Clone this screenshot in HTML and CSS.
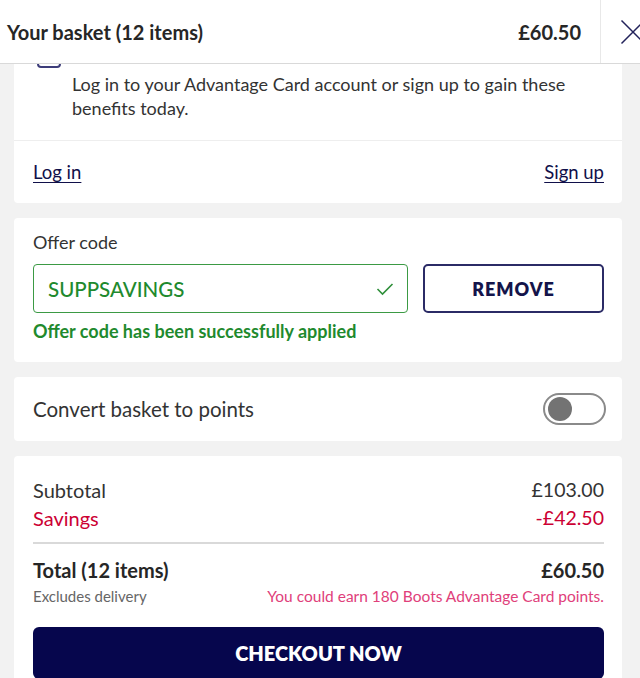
FILE: index.html
```html
<!DOCTYPE html>
<html lang="en">
<head>
<meta charset="utf-8">
<title>Your basket</title>
<link rel="stylesheet" href="styles.css">
</head>
<body>
<header class="topbar">
  <h1 class="topbar-title">Your basket (12 items)</h1>
  <span class="topbar-price">£60.50</span>
  <button class="topbar-close" aria-label="Close">
    <svg width="26" height="26" viewBox="0 0 26 26"><path d="M1.5 1.5 L24.5 24.5 M24.5 1.5 L1.5 24.5" stroke="#22225a" stroke-width="1.5" fill="none"/></svg>
  </button>
</header>
<main class="content">
  <section class="card card-login">
    <div class="login-body">
      <span class="checkbox"></span>
      <p class="login-desc">Log in to your Advantage Card account or sign up to gain these benefits today.</p>
    </div>
    <div class="login-links">
      <a href="#" class="link">Log in</a>
      <a href="#" class="link">Sign up</a>
    </div>
  </section>

  <section class="card card-offer">
    <label class="offer-label">Offer code</label>
    <div class="offer-row">
      <div class="offer-input">
        <span class="offer-value">SUPPSAVINGS</span>
        <svg class="offer-check" width="18" height="14" viewBox="0 0 18 14"><path d="M1.5 7 L6.5 12 L16.5 2" stroke="#2f8f3a" stroke-width="1.6" fill="none"/></svg>
      </div>
      <button class="offer-remove">REMOVE</button>
    </div>
    <p class="offer-msg">Offer code has been successfully applied</p>
  </section>

  <section class="card card-convert">
    <span class="convert-text">Convert basket to points</span>
    <span class="toggle"><span class="toggle-knob"></span></span>
  </section>

  <section class="card card-summary">
    <div class="sum-row"><span>Subtotal</span><span class="sum-amount">£103.00</span></div>
    <div class="sum-row sum-savings"><span>Savings</span><span class="sum-amount">-£42.50</span></div>
    <hr class="sum-divider">
    <div class="sum-row sum-total"><span>Total (12 items)</span><span>£60.50</span></div>
    <div class="sum-row sum-note"><span class="note-grey">Excludes delivery</span><span class="note-pink">You could earn 180 Boots Advantage Card points.</span></div>
    <button class="checkout">CHECKOUT NOW</button>
  </section>
</main>
</body>
</html>
```

FILE: styles.css
```css
* { box-sizing: border-box; }
html, body { margin: 0; padding: 0; }
body {
  background: #f2f2f2;
  font-family: Lato, "Open Sans", "Liberation Sans", sans-serif;
  color: #333;
  width: 640px;
  height: 678px;
  overflow: hidden;
  display: flex;
  flex-direction: column;
}
.topbar {
  flex: none;
  width: 664px;
  height: 64px;
  background: #fff;
  border-bottom: 1px solid #d9d9d9;
  display: flex;
  align-items: center;
}
.topbar-title {
  margin: 0 0 0 7px;
  flex: 1;
  font-size: 20px;
  font-weight: 700;
  color: #262626;
}
.topbar-price {
  font-size: 20px;
  font-weight: 700;
  color: #262626;
  margin-right: 19px;
}
.topbar-close {
  flex: none;
  width: 64px;
  height: 63px;
  border: 0;
  border-left: 1px solid #e8e8e8;
  background: #fff;
  padding: 0;
  display: flex;
  align-items: center;
  justify-content: center;
}
.content {
  flex: 1;
  overflow: hidden;
  padding: 0 18px 0 14px;
  display: flex;
  flex-direction: column;
  gap: 15px;
}
.card {
  flex: none;
  background: #fff;
  border-radius: 4px;
  width: 608px;
}
.card-login { border-radius: 0 0 4px 4px; }
.login-body {
  display: flex;
  align-items: flex-start;
  padding: 8px 18px 20px 23px;
  gap: 11px;
  border-bottom: 1px solid #eeeeee;
}
.checkbox {
  flex: none;
  width: 24px;
  height: 24px;
  margin-top: -28px;
  border: 2px solid #3d3d7a;
  border-radius: 4px;
}
.login-desc {
  flex: 1;
  margin: 0;
  font-size: 18px;
  line-height: 24px;
  color: #333;
}
.login-links {
  display: flex;
  justify-content: space-between;
  align-items: center;
  height: 62px;
  padding: 0 18px 0 19px;
}
.link {
  font-size: 18.5px;
  color: #10104a;
  text-decoration: underline;
  text-underline-offset: 3px;
  text-decoration-thickness: 1px;
}
.card-offer { padding: 12px 18px 19px 19px; }
.offer-label {
  display: block;
  font-size: 18px;
  line-height: 24px;
  color: #333;
  margin-bottom: 10px;
}
.offer-row { display: flex; gap: 15px; }
.offer-input {
  flex: 1;
  height: 49px;
  border: 1.5px solid #3b9a44;
  border-radius: 4px;
  display: flex;
  align-items: center;
  padding: 0 13px 0 14px;
}
.offer-value {
  flex: 1;
  font-size: 20.5px;
  font-weight: 500;
  color: #1f8a2e;
}
.offer-check { flex: none; }
.offer-remove {
  flex: none;
  width: 181px;
  height: 49px;
  border: 2px solid #2b2b66;
  border-radius: 5px;
  background: #fff;
  font-family: inherit;
  font-size: 18px;
  font-weight: 800;
  letter-spacing: 1px;
  color: #14144a;
}
.offer-msg {
  margin: 6px 0 0;
  font-size: 18px;
  line-height: 24px;
  font-weight: 700;
  color: #1f8a2e;
}
.card-convert {
  height: 64px;
  display: flex;
  align-items: center;
  justify-content: space-between;
  padding: 0 16px 0 19px;
}
.convert-text { font-size: 20.5px; color: #333; }
.toggle {
  width: 63px;
  height: 32px;
  border: 2px solid #8a8a8a;
  border-radius: 16px;
  display: flex;
  align-items: center;
  padding-left: 3px;
}
.toggle-knob {
  width: 24px;
  height: 24px;
  border-radius: 50%;
  background: #737373;
}
.card-summary {
  padding: 20px 18px 0 19px;
  height: 240px;
  border-radius: 4px 4px 0 0;
}
.sum-row {
  display: flex;
  justify-content: space-between;
  align-items: center;
  font-size: 20px;
  line-height: 28px;
  color: #333;
}
.sum-amount { font-size: 19.5px; }
.sum-savings { color: #cc0033; }
.sum-divider {
  border: 0;
  border-top: 2px solid #d9d9d9;
  margin: 10px 0 12px;
}
.sum-total { font-weight: 700; font-size: 20px; color: #262626; }
.sum-note { font-size: 15px; line-height: 24px; }
.note-grey { color: #666; }
.note-pink { color: #e0407a; font-size: 15.5px; }
.checkout {
  display: block;
  width: 100%;
  height: 52px;
  margin-top: 19px;
  border: 0;
  border-radius: 6px;
  background: #06064d;
  color: #fff;
  font-family: inherit;
  font-size: 20px;
  font-weight: 800;
}
```
